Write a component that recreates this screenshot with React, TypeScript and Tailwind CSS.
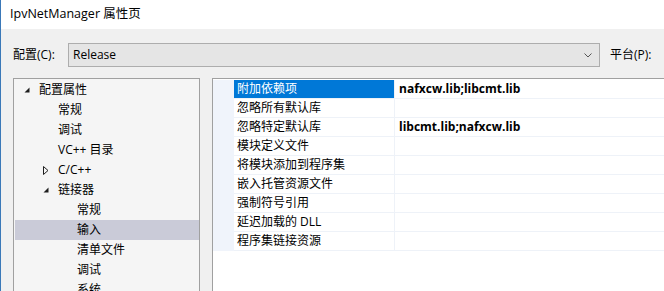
import React from "react";

const FONT = { fontFamily: '"Open Sans", "Noto Sans CJK SC", sans-serif' };

const ExpandedTri = () => (
  <svg width="6" height="6" viewBox="0 0 6 6" className="shrink-0">
    <polygon points="5.5,0.5 5.5,5.5 0.5,5.5" fill="#1e1e1e" />
  </svg>
);

const CollapsedTri = () => (
  <svg width="6" height="9" viewBox="0 0 6 9" className="shrink-0">
    <polygon points="0.5,0.5 5,4.5 0.5,8.5" fill="none" stroke="#1e1e1e" strokeWidth="1" />
  </svg>
);

type TreeItem = { label: string; indent: number; tri?: "open" | "closed"; selected?: boolean };

const tree: TreeItem[] = [
  { label: "配置属性", indent: 0, tri: "open" },
  { label: "常规", indent: 1 },
  { label: "调试", indent: 1 },
  { label: "VC++ 目录", indent: 1 },
  { label: "C/C++", indent: 1, tri: "closed" },
  { label: "链接器", indent: 1, tri: "open" },
  { label: "常规", indent: 2 },
  { label: "输入", indent: 2, selected: true },
  { label: "清单文件", indent: 2 },
  { label: "调试", indent: 2 },
  { label: "系统", indent: 2 },
];

const props: { name: string; value?: string; selected?: boolean }[] = [
  { name: "附加依赖项", value: "nafxcw.lib;libcmt.lib", selected: true },
  { name: "忽略所有默认库" },
  { name: "忽略特定默认库", value: "libcmt.lib;nafxcw.lib" },
  { name: "模块定义文件" },
  { name: "将模块添加到程序集" },
  { name: "嵌入托管资源文件" },
  { name: "强制符号引用" },
  { name: "延迟加载的 DLL" },
  { name: "程序集链接资源" },
];

export default function App() {
  return (
    <div
      className="w-[664px] h-[291px] overflow-hidden flex flex-col bg-white border-l border-[#3a78b8] text-[12px] text-black"
      style={FONT}
    >
      <div className="h-[29px] shrink-0 flex items-center pl-[9px] text-[12.5px] text-black">
        IpvNetManager 属性页
      </div>
      <div className="flex-1 bg-[#f0f0f0] flex flex-col min-h-0">
        <div className="mt-[14px] flex items-center h-[24px]">
          <div className="w-[67px] pl-[12px] shrink-0 whitespace-nowrap">配置(C):</div>
          <div className="w-[532px] h-[24px] shrink-0 bg-[#e5e5e5] border border-[#adadad] flex items-center pl-[4px] pr-[7px]">
            <span className="flex-1">Release</span>
            <svg width="8" height="5" viewBox="0 0 8 5">
              <polyline points="0.5,0.5 4,4 7.5,0.5" fill="none" stroke="#555" strokeWidth="1" />
            </svg>
          </div>
          <div className="pl-[10px] whitespace-nowrap">平台(P):</div>
        </div>
        <div className="mt-[11px] flex flex-1 min-h-0">
          <div className="ml-[12px] w-[187px] shrink-0 border border-b-0 border-[#a0a0a0] bg-[#f5f5f5] pt-[1px] pl-[1px]">
            {tree.map((t, i) => (
              <div
                key={i}
                className={`h-[20px] flex items-center ${t.selected ? "bg-[#cacbd8]" : ""}`}
              >
                <div
                  className={`shrink-0 flex items-center justify-end pr-[9px] ${
                    t.indent === 0 ? "w-[24px]" : t.indent === 1 ? "w-[43px]" : "w-[62px]"
                  }`}
                >
                  {t.tri === "open" && <ExpandedTri />}
                  {t.tri === "closed" && <CollapsedTri />}
                </div>
                <span className="whitespace-nowrap">{t.label}</span>
              </div>
            ))}
          </div>
          <div className="ml-[12px] flex-1 border-t border-l border-[#a0a0a0] bg-white pt-[1px]">
            {props.map((p, i) => (
              <div key={i} className="flex h-[19px]">
                <div className="w-[21px] shrink-0 bg-[#f0f4fb]" />
                <div
                  className={`w-[161px] shrink-0 pl-[3px] flex items-center border-b border-r border-[#eef2f8] whitespace-nowrap ${
                    p.selected ? "bg-[#0078d7] text-white border-b-[#eef2f8]" : ""
                  }`}
                >
                  {p.name}
                </div>
                <div className="flex-1 pl-[4px] flex items-center font-bold border-b border-[#eef2f8] whitespace-nowrap">
                  {p.value ?? ""}
                </div>
              </div>
            ))}
          </div>
        </div>
      </div>
    </div>
  );
}
